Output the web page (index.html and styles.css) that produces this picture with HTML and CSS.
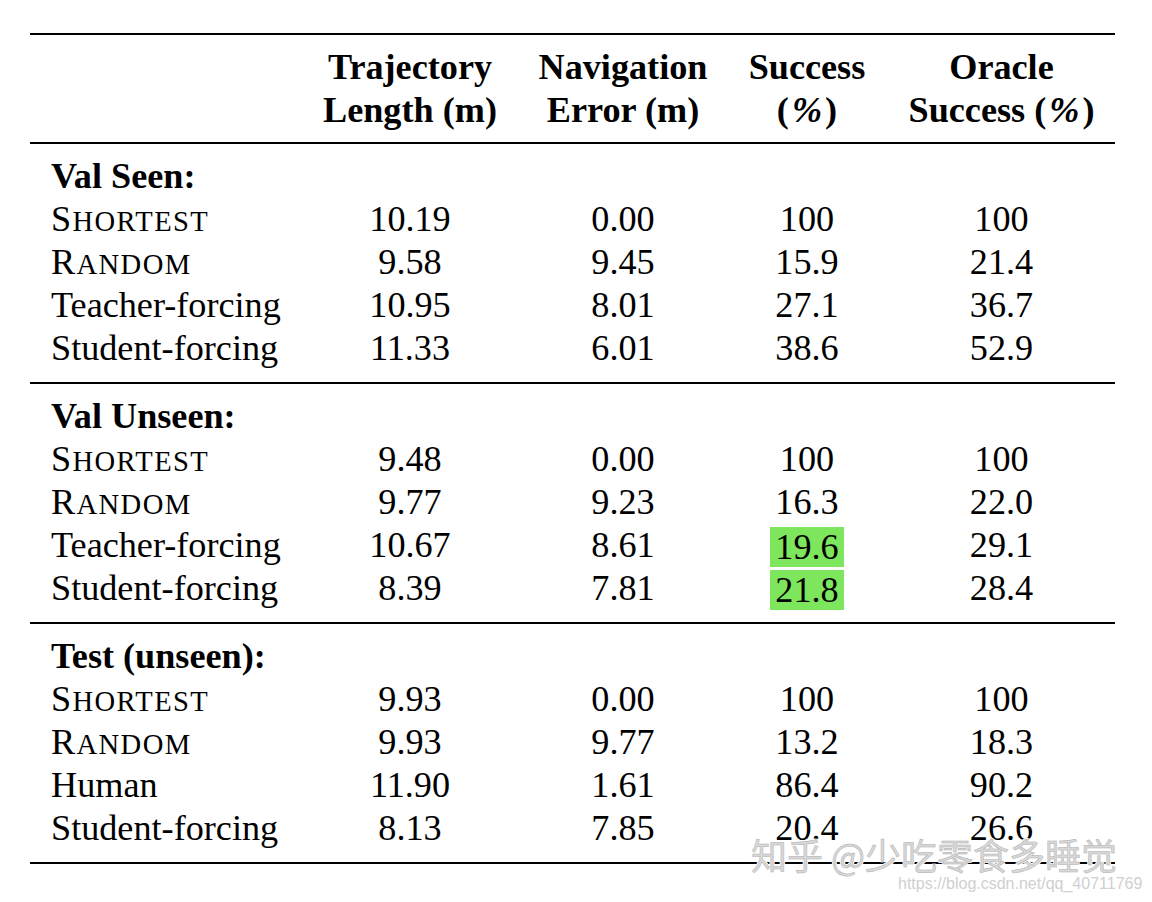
FILE: index.html
```html
<!DOCTYPE html>
<html lang="en">
<head>
<meta charset="utf-8">
<title>Results</title>
<link rel="stylesheet" href="styles.css">
</head>
<body>
<div class="page">
  <table class="results">
    <colgroup>
      <col class="c1"><col class="c2"><col class="c3"><col class="c4"><col class="c5">
    </colgroup>
    <thead>
      <tr>
        <th></th>
        <th>Trajectory<br>Length (m)</th>
        <th>Navigation<br>Error (m)</th>
        <th>Success<br>(<i class="pct">%</i>)</th>
        <th>Oracle<br>Success (<i class="pct">%</i>)</th>
      </tr>
    </thead>
    <tbody>
      <tr><td class="sec" colspan="5">Val Seen:</td></tr>
      <tr><td class="sc">S<span class="smc">hortest</span></td><td>10.19</td><td>0.00</td><td>100</td><td>100</td></tr>
      <tr><td class="sc">R<span class="smc">andom</span></td><td>9.58</td><td>9.45</td><td>15.9</td><td>21.4</td></tr>
      <tr><td>Teacher-forcing</td><td>10.95</td><td>8.01</td><td>27.1</td><td>36.7</td></tr>
      <tr><td>Student-forcing</td><td>11.33</td><td>6.01</td><td>38.6</td><td>52.9</td></tr>
    </tbody>
    <tbody>
      <tr><td class="sec" colspan="5">Val Unseen:</td></tr>
      <tr><td class="sc">S<span class="smc">hortest</span></td><td>9.48</td><td>0.00</td><td>100</td><td>100</td></tr>
      <tr><td class="sc">R<span class="smc">andom</span></td><td>9.77</td><td>9.23</td><td>16.3</td><td>22.0</td></tr>
      <tr><td>Teacher-forcing</td><td>10.67</td><td>8.61</td><td><span class="hl">19.6</span></td><td>29.1</td></tr>
      <tr><td>Student-forcing</td><td>8.39</td><td>7.81</td><td><span class="hl">21.8</span></td><td>28.4</td></tr>
    </tbody>
    <tbody>
      <tr><td class="sec" colspan="5">Test (unseen):</td></tr>
      <tr><td class="sc">S<span class="smc">hortest</span></td><td>9.93</td><td>0.00</td><td>100</td><td>100</td></tr>
      <tr><td class="sc">R<span class="smc">andom</span></td><td>9.93</td><td>9.77</td><td>13.2</td><td>18.3</td></tr>
      <tr><td>Human</td><td>11.90</td><td>1.61</td><td>86.4</td><td>90.2</td></tr>
      <tr><td>Student-forcing</td><td>8.13</td><td>7.85</td><td>20.4</td><td>26.6</td></tr>
    </tbody>
  </table>
  <div class="watermark">知乎 @少吃零食多睡觉</div>
  <div class="url">https://blog.csdn.net/qq_40711769</div>
</div>
</body>
</html>
```
FILE: styles.css
```css
html, body {
  margin: 0;
  padding: 0;
  background: #fff;
}

.page {
  position: relative;
  width: 1152px;
  height: 902px;
  padding-top: 33px;
  box-sizing: border-box;
}

.results {
  border-collapse: collapse;
  margin-left: 30px;
  width: 1085px;
  table-layout: fixed;
  font-family: "Liberation Serif", "Times New Roman", serif;
  font-size: 36.2px;
  color: #000;
}

.c1 { width: 270px; }
.c2 { width: 220px; }
.c3 { width: 206px; }
.c4 { width: 162px; }
.c5 { width: 227px; }

.results th {
  font-weight: bold;
  text-align: center;
  line-height: 43px;
  border-top: 2px solid #000;
  border-bottom: 2px solid #000;
  padding: 11px 0 10px;
  white-space: nowrap;
}

.pct {
  padding: 0 3px;
}

.results td {
  padding: 0;
  height: 43px;
  line-height: 43px;
  text-align: center;
  white-space: nowrap;
}

.results td:first-child {
  text-align: left;
  padding-left: 21px;
}

.results td.sec {
  font-weight: bold;
}

.results td.sc {
  letter-spacing: 1.4px;
}

.smc {
  text-transform: uppercase;
  font-size: 0.79em;
  line-height: 1;
}

.results tbody tr:first-child td {
  padding-top: 11px;
}

.results tbody tr:last-child td {
  padding-bottom: 12px;
  border-bottom: 2px solid #000;
}

.hl {
  display: inline-block;
  background: #7ee65c;
  padding: 0 5px;
  line-height: 40px;
  vertical-align: -2px;
}

.watermark {
  position: absolute;
  left: 751px;
  top: 833px;
  font-family: "Noto Sans CJK SC", sans-serif;
  font-size: 36px;
  line-height: 42px;
  color: #d8d8d8;
  -webkit-text-stroke: 0.5px #b0b0b0;
  text-shadow: 1px 1px 0 #fff, -1px -1px 0 #fff, 1px -1px 0 #fff, -1px 1px 0 #fff;
  white-space: nowrap;
}

.url {
  position: absolute;
  left: 898px;
  top: 874px;
  font-family: "Liberation Sans", Arial, sans-serif;
  font-size: 16px;
  line-height: 20px;
  color: #d0d0d0;
  white-space: nowrap;
}
```
